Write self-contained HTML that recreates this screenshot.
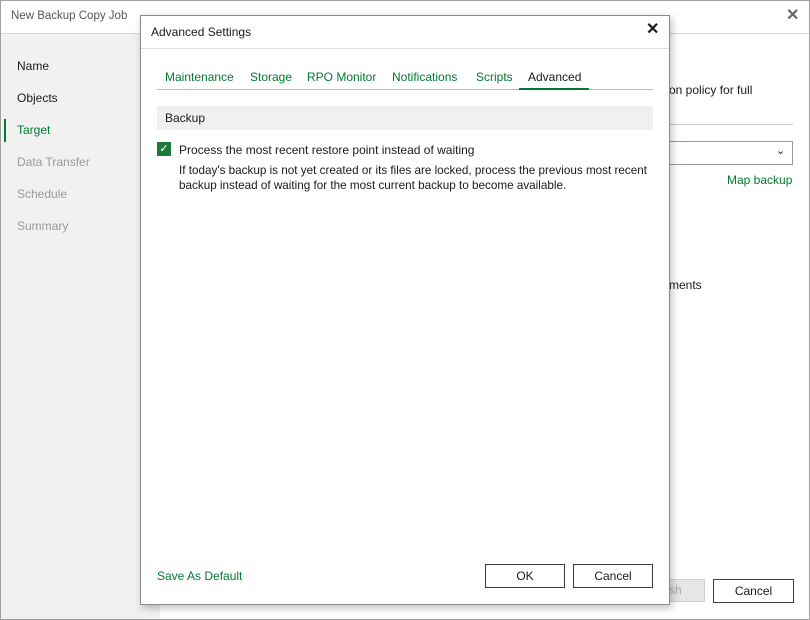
<!DOCTYPE html>
<html><head><style>
*{margin:0;padding:0;box-sizing:border-box}
body{width:810px;height:620px;position:relative;overflow:hidden;background:#fff;font-family:"Liberation Sans",sans-serif;font-size:12px;color:#1a1a1a}
.abs{position:absolute;white-space:nowrap}
.g{color:#007a33}
.btn{position:absolute;border:1px solid #3c3c3c;background:#fff;text-align:center;line-height:22px;height:24px}
</style></head><body>
<div class="abs" style="left:0;top:0;width:810px;height:620px;border:1px solid #a0a0a0"></div>
<div class="abs" style="left:1px;top:33px;width:808px;height:1px;background:#d6d6d6"></div>
<div class="abs" style="left:11px;top:10px;color:#555;font-size:11.5px">New Backup Copy Job</div>
<div class="abs" style="left:786px;top:5px;font-size:16px;color:#666;font-weight:bold">✕</div>
<div class="abs" style="left:1px;top:34px;width:159px;height:585px;background:#f1f1f1"></div>
<div class="abs" style="left:17px;top:59px">Name</div>
<div class="abs" style="left:17px;top:91px">Objects</div>
<div class="abs" style="left:4px;top:119px;width:2px;height:23px;background:#007a33"></div>
<div class="abs g" style="left:17px;top:123px">Target</div>
<div class="abs" style="left:17px;top:155px;color:#999">Data Transfer</div>
<div class="abs" style="left:17px;top:187px;color:#999">Schedule</div>
<div class="abs" style="left:17px;top:219px;color:#999">Summary</div>
<div class="abs" style="left:669px;top:83px">on policy for full</div>
<div class="abs" style="left:668px;top:124px;width:125px;height:1px;background:#ccc"></div>
<div class="abs" style="left:668px;top:141px;width:125px;height:24px;border:1px solid #999;border-left:none"></div>
<div class="abs" style="left:776px;top:144px;font-size:11px">⌄</div>
<div class="abs g" style="left:727px;top:173px">Map backup</div>
<div class="abs" style="left:669px;top:278px">ments</div>
<div class="abs" style="left:660px;top:579px;width:45px;height:23px;background:#e6e6e6;border:1px solid #d0d0d0;color:#aaa;padding-left:8px;line-height:20px">sh</div>
<div class="btn" style="left:713px;top:579px;width:81px;height:24px">Cancel</div>

<div class="abs" style="left:140px;top:15px;width:530px;height:590px;background:#fff;border:1px solid #8a8a8a;box-shadow:2px 3px 8px rgba(0,0,0,.25)"></div>
<div class="abs" style="left:141px;top:48px;width:528px;height:1px;background:#ddd"></div>
<div class="abs" style="left:151px;top:25px">Advanced Settings</div>
<div class="abs" style="left:646px;top:19px;font-size:16px;font-weight:bold">✕</div>
<div class="abs" style="left:157px;top:89px;width:496px;height:1px;background:#bbb"></div>
<div class="abs g" style="left:165px;top:70px">Maintenance</div>
<div class="abs g" style="left:250px;top:70px">Storage</div>
<div class="abs g" style="left:307px;top:70px">RPO Monitor</div>
<div class="abs g" style="left:392px;top:70px">Notifications</div>
<div class="abs g" style="left:476px;top:70px">Scripts</div>
<div class="abs" style="left:528px;top:70px">Advanced</div>
<div class="abs" style="left:519px;top:88px;width:70px;height:2px;background:#007a33"></div>
<div class="abs" style="left:157px;top:106px;width:496px;height:24px;background:#f0f0f0"></div>
<div class="abs" style="left:165px;top:111px">Backup</div>
<div class="abs" style="left:157px;top:142px;width:14px;height:14px;background:#1e7a3c;color:#fff;font-size:11px;text-align:center;line-height:14px">✓</div>
<div class="abs" style="left:179px;top:143px">Process the most recent restore point instead of waiting</div>
<div class="abs" style="left:179px;top:163px;font-size:11.7px;line-height:15px">If today's backup is not yet created or its files are locked, process the previous most recent<br>backup instead of waiting for the most current backup to become available.</div>
<div class="abs g" style="left:157px;top:569px">Save As Default</div>
<div class="btn" style="left:485px;top:564px;width:80px">OK</div>
<div class="btn" style="left:573px;top:564px;width:80px">Cancel</div>
</body></html>
